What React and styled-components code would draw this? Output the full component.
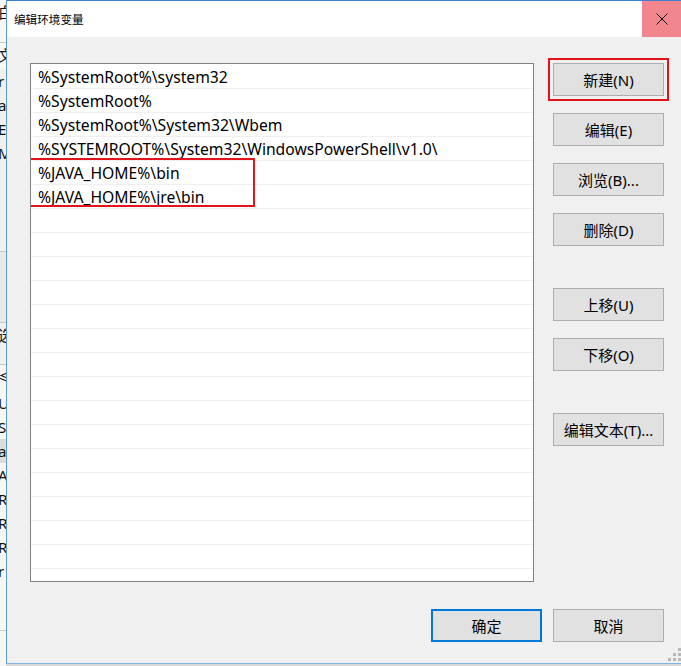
import React from "react";
import styled, { createGlobalStyle } from "styled-components";

const GlobalStyle = createGlobalStyle`
  html, body {
    margin: 0;
    padding: 0;
    background: #d9d9d9;
  }
  body {
    font-family: "Noto Sans", "Noto Sans CJK SC", sans-serif;
    color: #000;
  }
`;

const paths = [
  "%SystemRoot%\\system32",
  "%SystemRoot%",
  "%SystemRoot%\\System32\\Wbem",
  "%SYSTEMROOT%\\System32\\WindowsPowerShell\\v1.0\\",
];

const javaPaths = ["%JAVA_HOME%\\bin", "%JAVA_HOME%\\jre\\bin"];

const sideButtons = [
  { label: "新建(N)", highlighted: true, gapBefore: 0 },
  { label: "编辑(E)", gapBefore: 17 },
  { label: "浏览(B)...", gapBefore: 17 },
  { label: "删除(D)", gapBefore: 17 },
  { label: "上移(U)", gapBefore: 42 },
  { label: "下移(O)", gapBefore: 17 },
  { label: "编辑文本(T)...", gapBefore: 42 },
];

// the window behind the dialog, only a thin strip of it shows
const backItems = [
  { text: "白", height: 43, bg: "#f7f7f7", line: true },
  { text: "文", height: 26, bg: "#f7f7f7" },
  { text: "r", height: 24, bg: "#f0f0f0" },
  { text: "a", height: 24, bg: "#f0f0f0" },
  { text: "E", height: 24, bg: "#f0f0f0" },
  { text: "M", height: 24, bg: "#f0f0f0" },
  { text: "", height: 87, bg: "#f0f0f0", line: true },
  { text: "", height: 71, bg: "#e9e9e9", line: true },
  { text: "选", height: 42, bg: "#f0f0f0", line: true },
  { text: "≤", height: 26, bg: "#f7f7f7" },
  { text: "U", height: 24, bg: "#f7f7f7" },
  { text: "S", height: 24, bg: "#f7f7f7" },
  { text: "a", height: 24, bg: "#dcdcdc" },
  { text: "A", height: 24, bg: "#f7f7f7" },
  { text: "R", height: 24, bg: "#f7f7f7" },
  { text: "R", height: 24, bg: "#f7f7f7" },
  { text: "R", height: 24, bg: "#f7f7f7" },
  { text: "r", height: 72, bg: "#f7f7f7", line: true },
];

export default function App() {
  return (
    <>
      <GlobalStyle />
      <Screen>
        <BackWindow>
          {backItems.map((item, i) => (
            <BackRow key={i} $height={item.height} $bg={item.bg} $line={item.line}>
              {item.text}
            </BackRow>
          ))}
        </BackWindow>
        <Dialog>
          <TitleBar>
            <Title>编辑环境变量</Title>
            <CloseButton>
              <svg width="12" height="12" viewBox="0 0 12 12">
                <path d="M0.5 0.5 L11.5 11.5 M11.5 0.5 L0.5 11.5" stroke="#000" strokeWidth="1" />
              </svg>
            </CloseButton>
          </TitleBar>
          <Body>
            <Main>
              <ListBox>
                {paths.map((p) => (
                  <Row key={p}>{p}</Row>
                ))}
                <RowGroup>
                  {javaPaths.map((p) => (
                    <Row key={p}>{p}</Row>
                  ))}
                  <Marker />
                </RowGroup>
                {Array.from({ length: 15 }).map((_, i) => (
                  <Row key={"e" + i} />
                ))}
              </ListBox>
              <SideButtons>
                {sideButtons.map((b) => (
                  <SideButton key={b.label} $gap={b.gapBefore} $highlighted={b.highlighted}>
                    {b.label}
                  </SideButton>
                ))}
              </SideButtons>
            </Main>
            <Footer>
              <Button $primary>确定</Button>
              <Button>取消</Button>
            </Footer>
            <Grip>
              <svg width="14" height="14" viewBox="0 0 14 14">
                <rect x="10" y="0" width="3" height="3" fill="#b8b8b8" />
                <rect x="5" y="5" width="3" height="3" fill="#b8b8b8" />
                <rect x="10" y="5" width="3" height="3" fill="#b8b8b8" />
                <rect x="0" y="10" width="3" height="3" fill="#b8b8b8" />
                <rect x="5" y="10" width="3" height="3" fill="#b8b8b8" />
                <rect x="10" y="10" width="3" height="3" fill="#b8b8b8" />
              </svg>
            </Grip>
          </Body>
        </Dialog>
      </Screen>
    </>
  );
}

const Screen = styled.div`
  display: flex;
  width: 681px;
  height: 666px;
  overflow: hidden;
`;

const BackWindow = styled.div`
  width: 6px;
  flex-shrink: 0;
  display: flex;
  flex-direction: column;
  overflow: hidden;
  background: #f7f7f7;
`;

const BackRow = styled.div`
  height: ${(p) => p.$height}px;
  flex-shrink: 0;
  box-sizing: border-box;
  background: ${(p) => p.$bg};
  border-bottom: ${(p) => (p.$line ? "1px solid #c8c8c8" : "none")};
  margin-left: -2px;
  font-size: 15px;
  line-height: 24px;
  white-space: nowrap;
  color: #111;
`;

const Dialog = styled.div`
  position: relative;
  flex: 0 0 auto;
  width: 690px;
  height: 664px;
  box-sizing: border-box;
  border-left: 1px solid #5c9bd6;
  border-top: 1px solid #3f7fcf;
  border-bottom: 1px solid #7db4e6;
  background: #f0f0f0;
  display: flex;
  flex-direction: column;
`;

const TitleBar = styled.div`
  height: 36px;
  background: #fff;
  display: flex;
  align-items: center;
  padding-left: 7px;
  padding-right: 14px;
`;

const Title = styled.div`
  flex: 1;
  font-family: "Noto Sans CJK SC", sans-serif;
  font-size: 11.6px;
  color: #000;
`;

const CloseButton = styled.div`
  width: 40px;
  height: 36px;
  background: #f1868e;
  display: flex;
  align-items: center;
  justify-content: center;
`;

const Body = styled.div`
  flex: 1;
  display: flex;
  flex-direction: column;
  padding: 26px 0 0 23px;
`;

const Main = styled.div`
  display: flex;
  gap: 19px;
  align-items: flex-start;
`;

const ListBox = styled.div`
  width: 504px;
  height: 519px;
  box-sizing: border-box;
  border: 1px solid #828282;
  background: #fff;
  padding-top: 1px;
  overflow: hidden;
`;

const Row = styled.div`
  height: 24px;
  box-sizing: border-box;
  border-bottom: 1px solid #efefef;
  padding-left: 7px;
  font-family: "Noto Sans", "Noto Sans CJK SC", sans-serif;
  font-size: 15.7px;
  line-height: 24px;
  white-space: nowrap;
  color: #000;
`;

const RowGroup = styled.div`
  position: relative;
`;

const Marker = styled.div`
  position: absolute;
  left: -2px;
  top: -3px;
  width: 226px;
  height: 49px;
  box-sizing: border-box;
  border: 2px solid #e3131b;
  pointer-events: none;
`;

const SideButtons = styled.div`
  display: flex;
  flex-direction: column;
`;

const Button = styled.div`
  width: 111px;
  height: 33px;
  box-sizing: border-box;
  background: #e1e1e1;
  border: ${(p) => (p.$primary ? "2px solid #0078d7" : "1px solid #adadad")};
  display: flex;
  align-items: center;
  justify-content: center;
  font-family: "Noto Sans", "Noto Sans CJK SC", sans-serif;
  font-size: 15px;
  color: #000;
  white-space: nowrap;
`;

const SideButton = styled(Button)`
  margin-top: ${(p) => p.$gap}px;
  outline: ${(p) => (p.$highlighted ? "2px solid #e3131b" : "none")};
  outline-offset: 3px;
`;

const Footer = styled.div`
  display: flex;
  gap: 11px;
  margin-top: 27px;
  margin-left: 401px;
`;

const Grip = styled.div`
  position: absolute;
  left: 661px;
  bottom: 1px;
  line-height: 0;
`;
